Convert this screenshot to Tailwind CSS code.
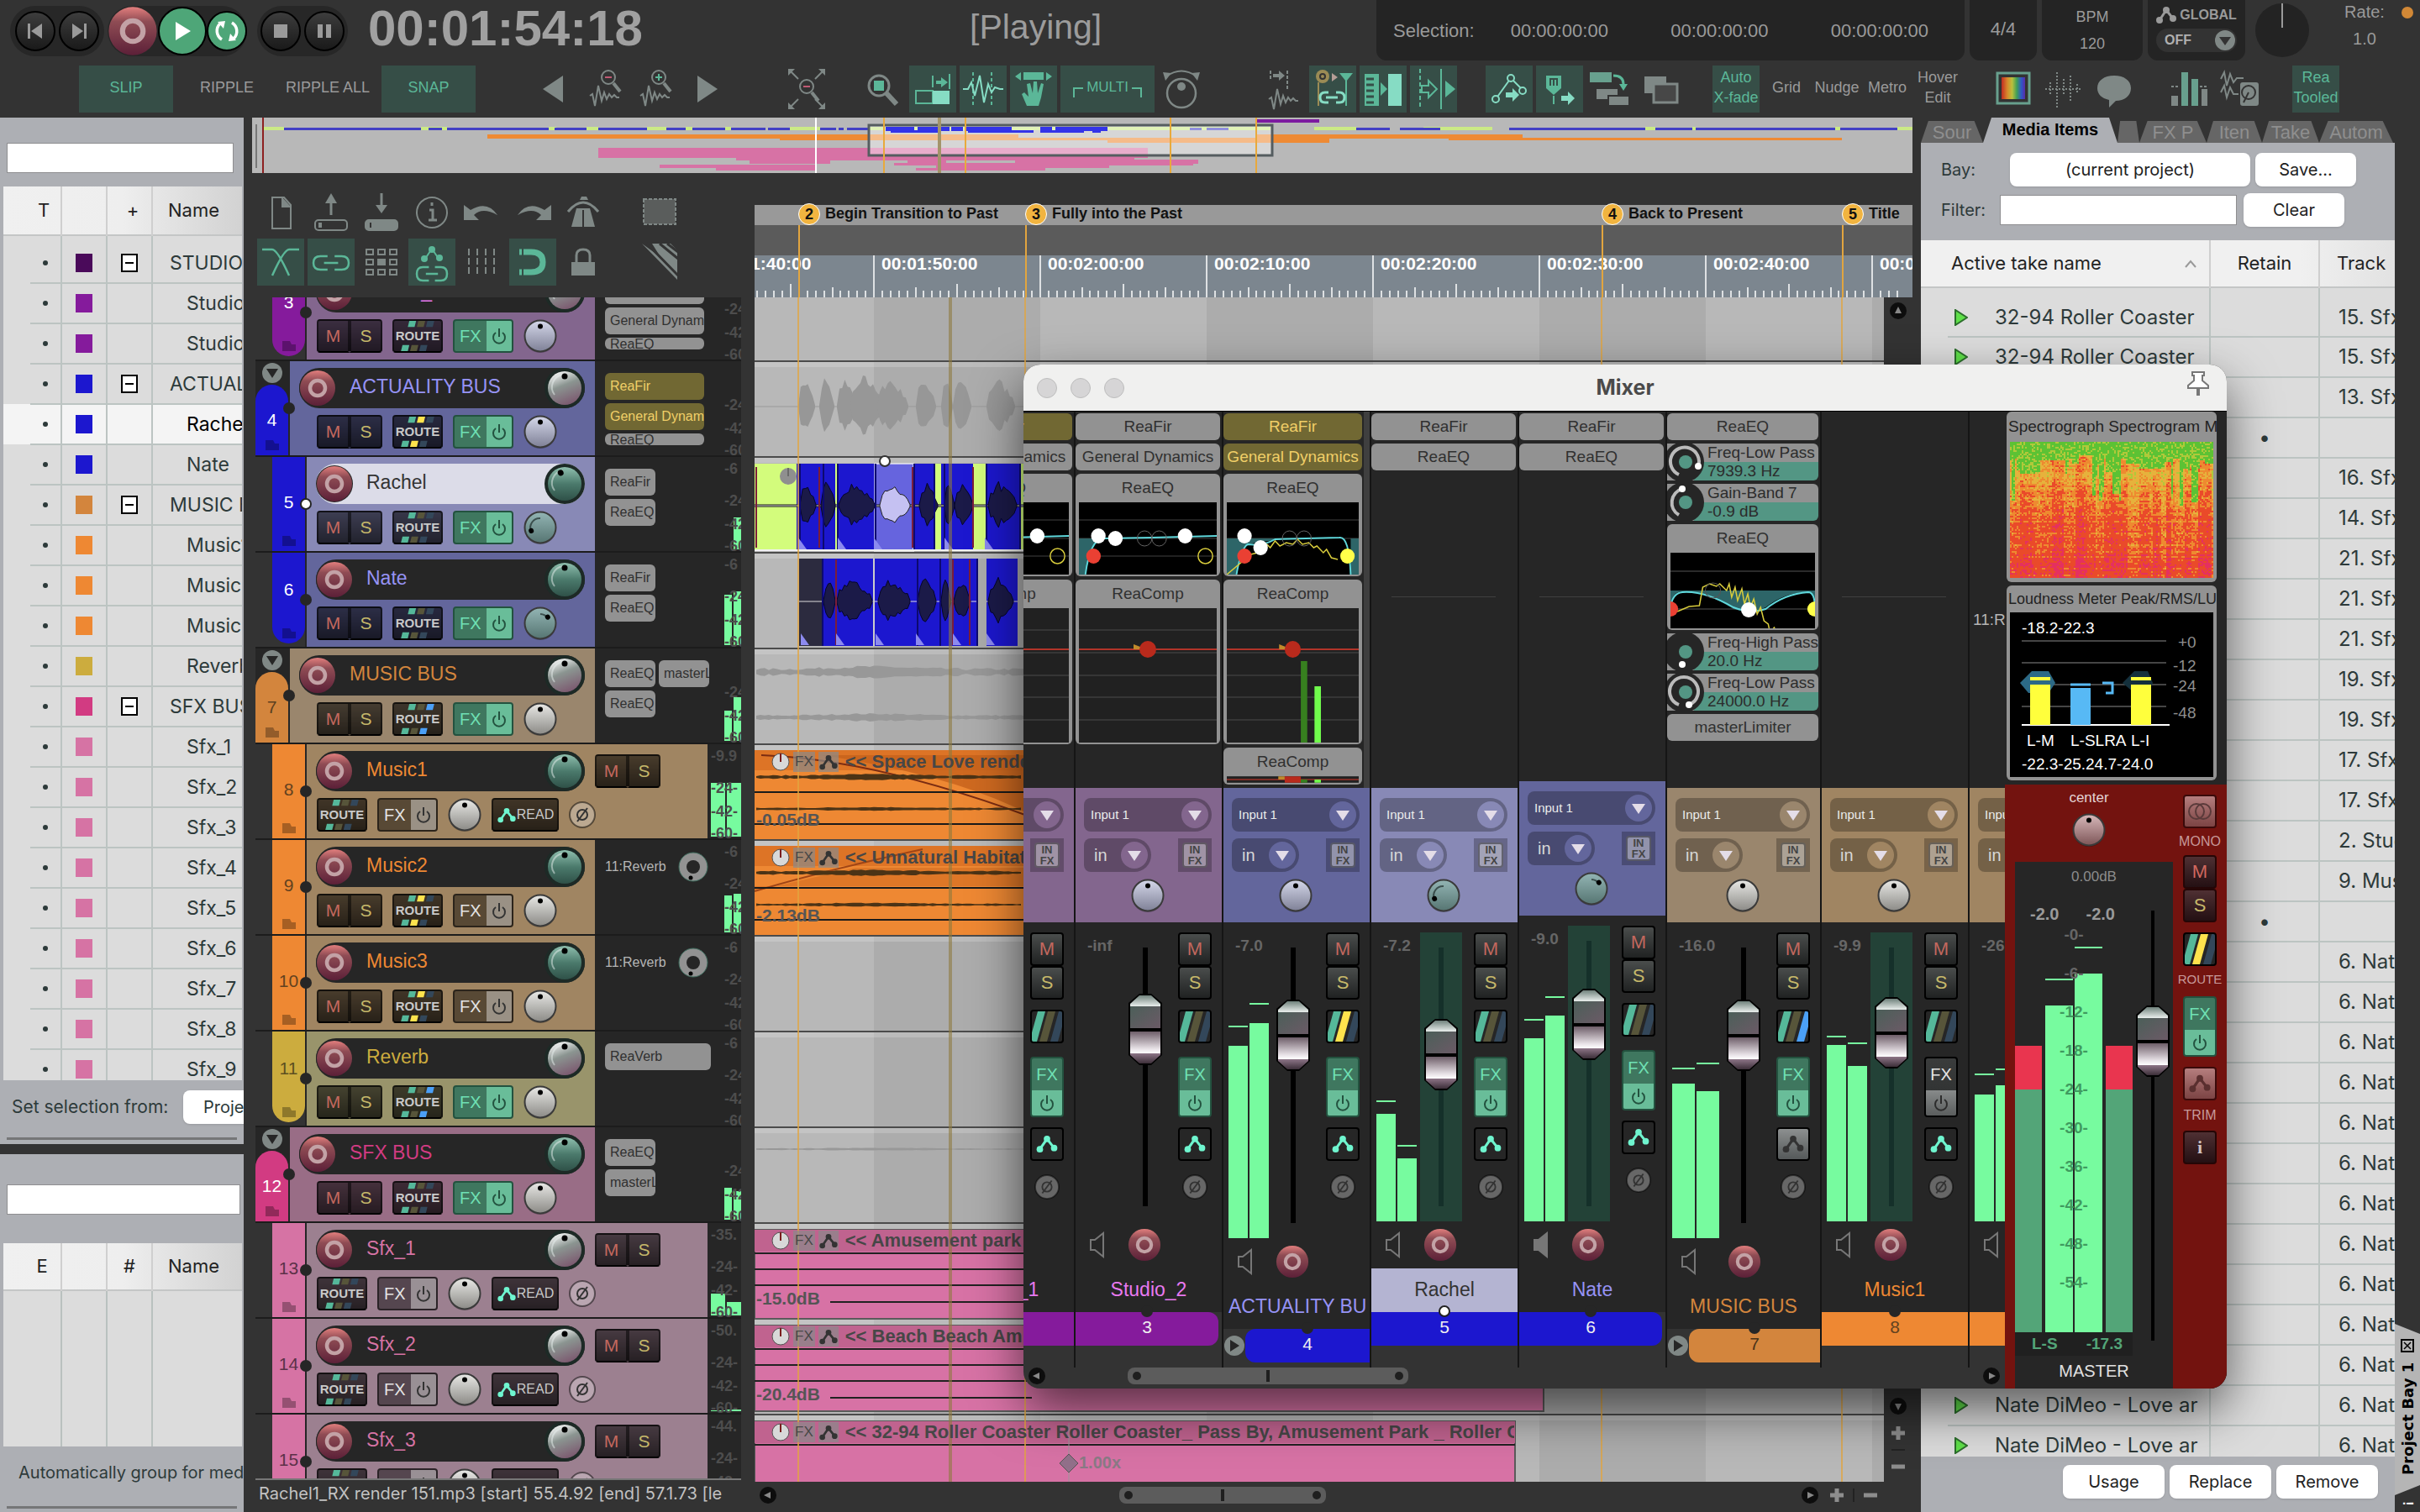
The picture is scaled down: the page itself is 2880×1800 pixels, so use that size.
<!DOCTYPE html>
<html lang="en">
<head>
<meta charset="utf-8">
<title>Mixer session</title>
<script src="https://cdn.jsdelivr.net/npm/@tailwindcss/browser@4"></script>
</head>
<body class="relative flex h-screen flex-col overflow-hidden bg-[#333333] font-['Liberation_Sans',Arial,sans-serif] text-[#9a9a9a]">
<svg class="absolute h-0 w-0" aria-hidden="true">
  <defs>
    <linearGradient id="kLight" x1="0" y1="0" x2="0" y2="1"><stop offset="0" stop-color="#e9e9e6"/><stop offset="1" stop-color="#8b8a86"/></linearGradient>
    <linearGradient id="kLilac" x1="0" y1="0" x2="0" y2="1"><stop offset="0" stop-color="#d5d8ea"/><stop offset="1" stop-color="#7e8096"/></linearGradient>
    <linearGradient id="kTeal" x1="0" y1="0" x2="0" y2="1"><stop offset="0" stop-color="#93b5b4"/><stop offset="1" stop-color="#567572"/></linearGradient>
    <linearGradient id="kPink" x1="0" y1="0" x2="0" y2="1"><stop offset="0" stop-color="#d8b9bb"/><stop offset="1" stop-color="#7d5557"/></linearGradient>
    <linearGradient id="vSilver" x1=".2" y1="0" x2=".6" y2="1"><stop offset="0" stop-color="#ffffff"/><stop offset=".45" stop-color="#8b9591"/><stop offset="1" stop-color="#7c5a70"/></linearGradient>
    <linearGradient id="vGreen" x1="0" y1="0" x2="0" y2="1"><stop offset="0" stop-color="#8fbfae"/><stop offset=".5" stop-color="#4b7a6c"/><stop offset="1" stop-color="#2f5148"/></linearGradient>
    <linearGradient id="recG" x1="0" y1="0" x2="0" y2="1"><stop offset="0" stop-color="#e27e7d"/><stop offset=".3" stop-color="#8f4c54"/><stop offset="1" stop-color="#5c2038"/></linearGradient>
    <linearGradient id="capA" x1="0" y1="0" x2="0" y2="1"><stop offset="0" stop-color="#70827c"/><stop offset="1" stop-color="#f3f7f5"/></linearGradient>
    <linearGradient id="capB" x1="0" y1="0" x2="1" y2="1"><stop offset="0" stop-color="#4c5f59"/><stop offset="1" stop-color="#6b5a66"/></linearGradient>
    <linearGradient id="capC" x1="0" y1="0" x2="0" y2="1"><stop offset="0" stop-color="#6e5e69"/><stop offset=".8" stop-color="#e9e3e8"/><stop offset="1" stop-color="#ffffff"/></linearGradient>
    <linearGradient id="capD" x1="0" y1="0" x2="0" y2="1"><stop offset="0" stop-color="#8d7587"/><stop offset="1" stop-color="#3c2f39"/></linearGradient>
    <linearGradient id="rainbow"><stop offset="0" stop-color="#c22b22"/><stop offset=".25" stop-color="#d88a2c"/><stop offset=".45" stop-color="#b9bf3c"/><stop offset=".65" stop-color="#3f9f57"/><stop offset=".85" stop-color="#2f56c9"/><stop offset="1" stop-color="#5b2ba6"/></linearGradient>
  </defs>
</svg>

<header class="flex-none">
  <div class="flex h-[74px] items-start">
    <div id="transport" class="flex h-[74px] w-[424px] items-center pl-3"></div>
    <div class="ml-[14px] w-[360px] pt-0.5 text-[60px] leading-[64px] font-bold text-[#a0a0a0]">00:01:54:18</div>
    <div class="flex-1 pt-2 pl-[356px] text-[41px] leading-12 text-[#9c9c9c]">[Playing]</div>
    <div class="flex h-[72px] w-[700px] flex-none items-center rounded-b-xl bg-[#242424] pr-[43px] pl-5 text-[22px]"><span class="w-[140px]">Selection:</span><span class="w-[191px]">00:00:00:00</span><span class="w-[191px]">00:00:00:00</span><span>00:00:00:00</span></div>
    <div class="ml-1.5 flex h-[72px] w-20 flex-none items-center justify-center rounded-b-xl bg-[#242424] pb-1 text-[22px]">4/4</div>
    <div class="ml-1.5 flex h-[72px] w-[120px] flex-none flex-col items-center justify-between rounded-b-xl bg-[#242424] py-2.5 text-[18px] leading-5"><span>BPM</span><span>120</span></div>
    <div class="ml-1.5 flex h-[72px] w-[116px] flex-none flex-col items-center rounded-b-xl bg-[#242424] pt-1.5">
      <span class="flex items-center gap-1 text-[16px] leading-6 font-bold"><svg class="h-5 w-6" viewBox="0 0 24 20"><path d="M4 16 12 4 20 14" fill="none" stroke="#9a9a9a" stroke-width="3"/><circle cx="4" cy="16" r="4" fill="#9a9a9a"/><circle cx="12" cy="4" r="4" fill="#9a9a9a"/><circle cx="20" cy="14" r="4" fill="#9a9a9a"/></svg>GLOBAL</span>
      <label class="relative mt-1 flex h-7 w-24 items-center"><select aria-label="Global automation" class="h-7 w-24 appearance-none rounded-full bg-[#333333] pl-2.5 text-[16px] font-bold text-[#b0b0b0]"><option>OFF</option></select><svg class="pointer-events-none absolute right-0.5 h-6 w-6" viewBox="0 0 24 24"><circle cx="12" cy="12" r="12" fill="#808886"/><path d="M5 8h14l-7 10z" fill="#333"/></svg></label>
    </div>
    <svg class="mt-1 ml-3 h-16 w-16 flex-none" viewBox="0 0 64 64"><circle cx="32" cy="32" r="32" fill="#232323"/><path d="M32 0v29" stroke="#9a9a9a" stroke-width="2"/></svg>
    <div class="ml-7 flex w-[76px] flex-none flex-col items-center gap-2 pt-0.5 text-[20px] leading-6"><span>Rate:</span><span>1.0</span></div>
    <div class="mt-2 mr-2 ml-1.5 h-3.5 w-3.5 flex-none rounded-full bg-[#d18836]"></div>
  </div>
  <div id="toolbar" class="flex h-[66px] items-start gap-1 pt-1 pl-[94px]"></div>
</header>

<div class="flex min-h-0 flex-1">
  <!-- left dock -->
  <aside class="flex w-[290px] flex-none flex-col font-[Inter,sans-serif] text-[#2d3a3a]">
    <section class="flex h-[1222px] flex-none flex-col overflow-hidden bg-[#adafb4]">
      <input aria-label="Filter tracks" class="mt-[30px] ml-2 h-9 w-[270px] flex-none border border-[#8e8e90] bg-white">
      <div class="mt-4 ml-1 h-[1064px] w-[284px] flex-none overflow-hidden bg-[#dcdcdc]">
        <table class="w-full table-fixed border-collapse text-[23px]">
          <thead><tr class="h-[58px] border-b-2 border-[#c4c6c6] bg-linear-to-r from-[#f0f0f0] via-[#eeeeee] to-[#d2d2d2] text-[22px] text-[#222]"><th class="w-8"></th><th class="w-[37px] border-r-2 border-[#cfcfcf] pr-1 font-normal">T</th><th class="w-[54px] border-r-2 border-[#cfcfcf]"></th><th class="w-[54px] border-r-2 border-[#cfcfcf] pl-2 font-normal">+</th><th class="pl-[18px] text-left font-normal">Name</th></tr></thead>
          <tbody id="trackTable"></tbody>
        </table>
      </div>
      <div class="flex h-[68px] items-center gap-[22px] overflow-hidden pb-1 pl-3.5 text-[21px] whitespace-nowrap"><span class="w-[182px]">Set selection from:</span><button class="h-10 w-[110px] flex-none rounded-lg bg-white pl-6 text-left text-[20px] shadow">Project</button></div>
      <div class="mx-2 h-[3px] flex-none bg-[#757678]"></div>
    </section>
    <section class="mt-3 flex flex-1 flex-col overflow-hidden bg-[#adafb4]">
      <input aria-label="Filter groups" class="mt-9 ml-2 h-9 w-[278px] flex-none border border-[#8e8e90] bg-white">
      <div class="mt-[34px] ml-1 h-[242px] w-[284px] flex-none bg-[#dcdcdc]">
        <table class="h-full w-full table-fixed border-collapse text-[22px] text-[#222]">
          <thead><tr class="h-[56px] border-b-2 border-[#c4c6c6] bg-linear-to-r from-[#f0f0f0] via-[#eeeeee] to-[#d2d2d2]"><th class="w-[69px] border-r-2 border-[#cfcfcf] pl-6 font-normal">E</th><th class="w-[54px] border-r-2 border-[#cfcfcf]"></th><th class="w-[54px] border-r-2 border-[#cfcfcf] font-normal">#</th><th class="pl-[18px] text-left font-normal">Name</th></tr></thead>
          <tbody><tr><td class="border-r-2 border-[#b9c1bf]"></td><td class="border-r-2 border-[#b9c1bf]"></td><td class="border-r-2 border-[#b9c1bf]"></td><td></td></tr></tbody>
        </table>
      </div>
      <div class="flex-1 overflow-hidden pt-4 pl-[22px] text-[20px] whitespace-nowrap">Automatically group for media</div>
      <div class="mx-2 mb-1 h-[3px] flex-none bg-[#757678]"></div>
    </section>
  </aside>

  <!-- project area -->
  <main class="ml-2.5 flex min-w-0 flex-1 flex-col">
    <svg id="navigator" class="h-[66px] w-full flex-none bg-[#b8b8b8]" viewBox="0 0 1976 66" preserveAspectRatio="none"></svg>
    <div class="flex min-h-0 flex-1">
      <div class="flex w-[598px] flex-none flex-col">
        <div class="h-[148px] flex-none pt-[18px] pl-1.5">
          <div id="tb1" class="flex gap-1"></div>
          <div id="tb2" class="mt-1 flex gap-1"></div>
        </div>
        <div class="ml-1 min-h-0 w-[578px] flex-1 overflow-hidden"><div id="tcp" class="-mt-[38px]"></div></div>
        <div class="ml-1 h-10 w-[578px] flex-none overflow-hidden border-t-2 border-[#777] pt-1 pl-1 font-[Inter,sans-serif] text-[20px] leading-6 whitespace-nowrap text-[#c2c2c2]">Rachel1_RX render 151.mp3 [start] 55.4.92 [end] 57.1.73 [le</div>
      </div>
      <div class="flex min-w-0 flex-1 flex-col pt-[38px]">
        <div id="markers" class="relative h-6 flex-none bg-[#999999]"></div>
        <div id="regions" class="relative h-9 flex-none bg-[#5b5b5b]"></div>
        <div id="ruler" class="relative h-[50px] flex-none overflow-hidden bg-[#7c868f]"></div>
        <div class="flex min-h-0 flex-1">
          <div id="lanes" class="relative min-w-0 flex-1 overflow-hidden bg-[#b6b6b6]"></div>
          <div class="flex w-[34px] flex-none flex-col items-center justify-between pt-1.5 pb-2">
            <svg class="h-5 w-5" viewBox="0 0 20 20"><circle cx="10" cy="10" r="10" fill="#0d0d0d"/><path d="M10 5l4 8H6z" fill="#888"/></svg>
            <svg class="h-[110px] w-5" viewBox="0 0 20 110"><circle cx="10" cy="28" r="10" fill="#0d0d0d"/><path d="M10 33l4-8H6z" fill="#888"/><path d="M2 60h16M10 52v16M2 100h16" stroke="#8d8d8d" stroke-width="5"/><path d="M2 80h16" stroke="#222" stroke-width="2"/></svg>
          </div>
        </div>
        <div class="flex h-9 flex-none items-center pb-1">
          <svg class="ml-1.5 h-5 w-5" viewBox="0 0 20 20"><circle cx="10" cy="10" r="10" fill="#0d0d0d"/><path d="M5 10l8-4v8z" fill="#888"/></svg>
          <div class="ml-[408px] flex h-5 w-[246px] items-center justify-between rounded-lg bg-[#5c5c5c] px-1.5"><i class="h-2.5 w-2.5 rounded-full bg-[#1f1f1f]"></i><i class="h-3.5 w-1 bg-[#1f1f1f]"></i><i class="h-2.5 w-2.5 rounded-full bg-[#1f1f1f]"></i></div>
          <svg class="mr-9 ml-auto h-5 w-24" viewBox="0 0 96 20"><circle cx="10" cy="10" r="10" fill="#0d0d0d"/><path d="M15 10l-8-4v8z" fill="#888"/><path d="M34 10h16M42 2v16M74 10h16" stroke="#8d8d8d" stroke-width="5"/><path d="M62 2v16" stroke="#222" stroke-width="2"/></svg>
        </div>
      </div>
    </div>
  </main>

  <!-- media items dock -->
  <aside class="ml-2.5 flex w-[564px] flex-none flex-col font-[Inter,sans-serif] text-[#2d3a3a]">
    <nav class="flex h-[30px] flex-none items-end font-['Liberation_Sans',Arial,sans-serif] text-[22px] text-[#8f8f8f]" id="dockTabs"></nav>
    <form class="flex h-[116px] flex-none flex-col gap-2 bg-[#adafb4] pt-3 pl-6 text-[20px]">
      <div class="flex items-center"><label for="bay" class="w-[82px]">Bay:</label><button id="bay" type="button" class="h-10 w-[286px] rounded-lg bg-white text-[20px] text-[#222] shadow">(current project)</button><button type="button" class="ml-1.5 h-10 w-[120px] rounded-lg bg-white text-[20px] text-[#222] shadow">Save...</button></div>
      <div class="flex items-center"><label for="filter" class="w-[70px]">Filter:</label><input id="filter" class="h-9 w-[282px] border border-[#8e8e90] bg-white"><button type="button" class="ml-2 h-10 w-[120px] rounded-lg bg-white text-[20px] text-[#222] shadow">Clear</button></div>
    </form>
    <div class="min-h-0 flex-1 overflow-hidden bg-[#dcdcdc]">
      <table class="w-full table-fixed border-collapse text-[24px] whitespace-nowrap">
        <thead><tr class="h-[56px] border-b-2 border-[#c4c6c6] bg-linear-to-r from-[#f0f0f0] from-80% to-[#e2e2e2] text-left text-[22px] text-[#222]"><th class="w-8"></th><th class="w-[312px] border-r-2 border-[#cfcfcf] font-normal"><span class="flex items-center justify-between pr-3.5 pl-1">Active take name<svg class="h-3 w-4" viewBox="0 0 16 12"><path d="M2 10l6-7 6 7" fill="none" stroke="#999" stroke-width="2"/></svg></span></th><th class="w-[130px] border-r-2 border-[#cfcfcf] text-center font-normal">Retain</th><th class="overflow-hidden pl-5 font-normal">Track</th></tr></thead>
        <tbody id="mediaTable"></tbody>
      </table>
    </div>
    <div class="flex h-[66px] flex-none items-start justify-end gap-1.5 bg-[#adafb4] pt-2.5 pr-5 text-[20px] text-[#222]"><button class="h-10 w-[121px] rounded-lg bg-white shadow">Usage</button><button class="h-10 w-[121px] rounded-lg bg-white shadow">Replace</button><button class="h-10 w-[121px] rounded-lg bg-white shadow">Remove</button></div>
  </aside>
  <div class="flex w-[30px] flex-none flex-col justify-end">
    <a href="#bay" class="flex h-[204px] w-[30px] flex-none rotate-180 items-center gap-3 bg-[#b5b5b5] pt-6 text-[18px] font-bold text-black [clip-path:polygon(0_12px,100%_0,100%_100%,0_192px)] [writing-mode:vertical-rl]"><span class="font-['DejaVu_Sans',sans-serif] whitespace-nowrap">Project Bay 1</span><span class="h-4 w-4 border-2 border-black"><svg class="h-3 w-3" viewBox="0 0 12 12"><path d="M2 2l8 8M10 2l-8 8" stroke="#000" stroke-width="1.500"/></svg></span></a>
    <b class="h-5 flex-none rotate-90 text-center text-[16px] leading-5 text-white">!</b>
  </div>
</div>

<!-- mixer window -->
<section aria-label="Mixer" class="absolute top-[434px] left-[1218px] flex h-[1219px] w-[1432px] flex-col overflow-hidden rounded-[20px] bg-[#333333] shadow-[0_24px_60px_rgba(0,0,0,0.6)]">
  <div class="flex h-14 flex-none items-center border-b border-black bg-[#f0f0ef] px-4">
    <div class="flex w-[200px] gap-4"><i class="h-6 w-6 rounded-full border border-[#bdbdbd] bg-[#d6d5d6]"></i><i class="h-6 w-6 rounded-full border border-[#bdbdbd] bg-[#d6d5d6]"></i><i class="h-6 w-6 rounded-full border border-[#bdbdbd] bg-[#d6d5d6]"></i></div>
    <h1 class="flex-1 text-center font-[Inter,sans-serif] text-[25px] font-bold text-[#4a4a4a]">Mixer</h1>
    <div class="flex w-[200px] justify-end pb-3"><svg class="h-8 w-9" viewBox="0 0 36 32" fill="#fff" stroke="#777" stroke-width="2"><path d="M11 3h14v4h-2v6l7 6v3H6v-3l7-6V7h-2zM17 22v8h2v-8" /></svg></div>
  </div>
  <div class="flex min-h-0 flex-1">
    <div class="flex min-w-0 flex-1 flex-col overflow-hidden">
      <div id="strips" class="-ml-[116px] flex h-[1138px] flex-none"></div>
      <div class="flex flex-1 items-start">
        <svg class="ml-1.5 h-5 w-5" viewBox="0 0 20 20"><circle cx="10" cy="10" r="10" fill="#0d0d0d"/><path d="M5 10l8-4v8z" fill="#888"/></svg>
        <div class="ml-[98px] flex h-5 w-[334px] items-center justify-between rounded-lg bg-[#5c5c5c] px-1.5"><i class="h-2.5 w-2.5 rounded-full bg-[#1f1f1f]"></i><i class="h-3.5 w-1 bg-[#1f1f1f]"></i><i class="h-2.5 w-2.5 rounded-full bg-[#1f1f1f]"></i></div>
        <svg class="mr-1.5 ml-auto h-5 w-5" viewBox="0 0 20 20"><circle cx="10" cy="10" r="10" fill="#0d0d0d"/><path d="M15 10l-8-4v8z" fill="#888"/></svg>
      </div>
    </div>
    <div id="master" class="flex w-[264px] flex-none flex-col bg-[#262626]"></div>
  </div>
</section>

<script>
const $ = id => document.getElementById(id);
let seed = 7;
const rnd = () => (seed = (seed * 16807) % 2147483647) / 2147483647;

/* ---------- shared drawings ---------- */
const node3 = c => `<path d="M7 27 18 11 29 25" fill="none" stroke="${c}" stroke-width="4"/><circle cx="7" cy="27" r="5" fill="${c}"/><circle cx="18" cy="11" r="5" fill="${c}"/><circle cx="29" cy="25" r="5" fill="${c}"/>`;
const power = c => `<svg class="h-[22px] w-5" viewBox="0 0 20 22"><path d="M6 7a7 7 0 1 0 8 0M10 2v10" fill="none" stroke="${c}" stroke-width="2"/></svg>`;
const rec = cls => `<svg class="${cls}" viewBox="0 0 44 44"><circle cx="22" cy="22" r="21" fill="url(#recG)"/><circle cx="22" cy="22" r="9" fill="none" stroke="#c3a2a6" stroke-width="4.5"/></svg>`;
const knob = (fill, ang = 0) => `<svg class="h-10 w-10" viewBox="0 0 40 40"><ellipse cx="20" cy="24" rx="18" ry="16" fill="#000" opacity=".25"/><circle cx="20" cy="20" r="18.5" fill="url(#${fill})" stroke="#3a3a3a" stroke-width="2"/>${ang ? `<path d="M20 9${ang < 0 ? 'A11 11 0 0 0 9 24' : 'A11 11 0 0 1 29 14'}" fill="none" stroke="#1c2b29" stroke-width="2" opacity=".7"/>` : ''}<circle cx="20" cy="8.500" r="3" transform="rotate(${ang} 20 20)" fill="#000"/></svg>`;
const vol = (green, rot = 0) => `<svg class="h-12 w-12" viewBox="0 0 48 48"><circle cx="24" cy="24" r="24" fill="#1d2a26"/><circle cx="24" cy="24" r="20" fill="url(#${green ? 'vGreen' : 'vSilver'})"/><path d="M22 8a15 15 0 0 0-10 24" fill="none" stroke="#e8f0ee" stroke-opacity=".5" stroke-width="2"/><circle cx="24" cy="10" r="3.500" transform="rotate(${rot} 24 24)" fill="#000"/></svg>`;
const stripe = (y, off, c) => `<path d="M${17 + off} ${y}h9l-2 8h-9z" fill="#55b89a"/><path d="M${29 + off} ${y}h9l-2 8h-9z" fill="${c[0]}"/><path d="M${41 + off} ${y}h9l-2 8h-9z" fill="${c[1]}"/>`;
const rc = k => k === 'y' ? ['#ffe34d', '#33475a'] : k === 'b' ? ['#57553a', '#4ba0f7'] : ['#57553a', '#33475a'];
const routeBtn = k => `<button class="relative flex h-10 w-[60px] flex-none items-center justify-center rounded border-2 border-black/50 border-b-black bg-linear-to-b from-black/60 to-black/75 text-[15px] font-bold text-[#c9c9c9]"><svg class="absolute inset-0 h-full w-full" viewBox="0 0 60 40">${stripe(0, 2, rc(k))}${stripe(32, -7, rc(k))}</svg>ROUTE</button>`;
const ms = `<span class="flex flex-none"><button class="h-10 w-[39px] rounded-l border-2 border-black/50 border-b-black bg-linear-to-b from-black/55 to-black/75 text-[21px] leading-9 text-[#c2685e]">M</button><button class="h-10 w-[39px] rounded-r border-2 border-black/50 border-b-black bg-linear-to-b from-black/55 to-black/75 text-[21px] leading-9 text-[#c6b86a]">S</button></span>`;
const fxBtn = on => on
  ? `<button class="flex h-10 w-[72px] flex-none overflow-hidden rounded border-2 border-[#23523f] bg-[#3f775f] text-[20px] leading-9 text-[#6fe0b4]"><span class="w-10">FX</span><span class="flex h-9 w-8 items-center justify-center bg-[#69bd99]">${power('#23523f')}</span></button>`
  : `<button class="flex h-10 w-[72px] flex-none overflow-hidden rounded border-2 border-black/50 bg-black/45 text-[20px] leading-9 text-[#e4e4e4]"><span class="w-10">FX</span><span class="flex h-9 w-8 items-center justify-center bg-white/40">${power('#333')}</span></button>`;
const phase = cls => `<svg class="${cls}" viewBox="0 0 32 32"><circle cx="16" cy="16" r="15" fill="#fff" fill-opacity=".3" stroke="#000" stroke-opacity=".5" stroke-width="2"/><circle cx="16" cy="16" r="6" fill="none" stroke="#333" stroke-width="2"/><path d="M10 24 22 8" stroke="#333" stroke-width="2"/></svg>`;

/* ---------- transport ---------- */
const dark = inner => `<button class="flex h-12 w-12 flex-none items-center justify-center rounded-full border-2 border-black bg-linear-to-b from-[#3d3d3d] to-[#1a1a1a]"><svg class="h-7 w-7" viewBox="0 0 28 28" fill="#9a9a9a">${inner}</svg></button>`;
$('transport').innerHTML = `
<div class="flex h-[60px] flex-none items-center gap-1 rounded-full bg-[#272727] px-1.5">${dark('<path d="M5 5h3v18H5zM22 5v18L9 14z"/>')}${dark('<path d="M20 5h3v18h-3zM6 5v18l13-9z"/>')}</div>
<div class="ml-1 flex h-[60px] flex-none items-center rounded-full bg-[#272727]"><button class="flex h-[60px] w-[60px] items-center justify-center">${rec('h-[60px] w-[60px]')}</button>
<button class="flex h-[58px] w-[58px] items-center justify-center rounded-full border-2 border-black bg-[#4ea678]"><svg class="h-7 w-7" viewBox="0 0 28 28"><path d="M6 3v22l18-11z" fill="#fff"/></svg></button>
<button class="flex h-12 w-12 items-center justify-center rounded-full border-2 border-black bg-[#4ea678]"><svg class="h-8 w-8" viewBox="0 0 32 32" fill="none" stroke="#fff" stroke-width="3.500"><path d="M10 26A12 12 0 0 1 8 7M22 6a12 12 0 0 1 2 19"/><path d="M5 5l9-1-2 9zM27 27l-9 1 2-9z" fill="#fff" stroke="none"/></svg></button></div>
<div class="ml-3 flex h-[60px] flex-none items-center gap-1 rounded-full bg-[#272727] px-1">${dark('<path d="M6 6h16v16H6z"/>')}${dark('<path d="M6 6h6v16H6zM16 6h6v16h-6z"/>')}</div>`;

/* ---------- main toolbar ---------- */
const G = '#7f8886', T = '#5bb798', L = '#86dcc4';
const ic = (inner, on) => `<button class="h-14 w-14 flex-none ${on ? 'bg-[#364e47]' : ''}"><svg class="h-14 w-14" viewBox="0 0 56 56" fill="none" stroke-width="2">${inner}</svg></button>`;
const txt = (t, on, w) => `<button class="flex h-14 flex-none items-center justify-center pb-1 text-[18px] leading-6 whitespace-nowrap ${w ? 'w-28' : 'w-14'} ${on ? 'bg-[#364e47] text-[#5bb798]' : ''}"><span>${t}</span></button>`;
const gap = c => `<i class="${c} flex-none"></i>`;
const wave = (x, y, c) => `<path d="M${x} ${y}l3-2 3 14 4-24 4 18 3-10 3 8 3-6 3 4 3-3 3 3h3" stroke="${c}"/>`;
const lens = (s) => `<circle cx="32" cy="14" r="8" stroke="${G}"/><path d="M38 21l8 10" stroke="${G}" stroke-width="4"/>${s}`;
$('toolbar').innerHTML = [
  txt('SLIP', 1, 1), gap('w-0'), txt('RIPPLE', 0, 1), gap('w-0'), txt('RIPPLE ALL', 0, 1), gap('w-0'), txt('SNAP', 1, 1),
  gap('w-[58px]'),
  ic(`<path d="M38 12v32L14 28z" fill="${G}"/>`),
  ic(lens(`<path d="M28 14h8" stroke="#c05a74"/>`) + wave(10, 36, G)),
  ic(lens(`<path d="M28 14h8M32 10v8" stroke="${T}"/>`) + wave(10, 36, G)),
  ic(`<path d="M18 12v32l24-16z" fill="${G}"/>`),
  gap('w-14'),
  ic(`<circle cx="28" cy="25" r="8" stroke="${G}"/><path d="M24 25h8" stroke="#c05a74"/><path d="M34 32l8 10" stroke="${G}" stroke-width="4"/><path d="M18 16 9 7M38 16l9-9M18 40l-9 9M38 40l9 9" stroke="${G}"/><path d="M6 4h8l-8 8zM50 4v8l-8-8zM6 52v-8l8 8zM50 52h-8l8-8z" fill="${G}"/>`),
  gap('w-[26px]'),
  ic(`<circle cx="24" cy="24" r="12" stroke="${G}" stroke-width="3"/><path d="M18 18h12v12H18z" fill="${T}"/><path d="M33 33l12 13" stroke="${G}" stroke-width="6"/>`),
  ic(`<path d="M8 30h20v15H8z" stroke="${T}"/><path d="M28 30h20v16H28z" fill="${L}"/><path d="M28 12v14M48 10v18" stroke="${T}"/><path d="M32 18h6v-4l8 6-8 6v-4h-6z" fill="${T}"/>`, 1),
  ic(`<path d="M16 8v42M38 8v42" stroke="${T}" stroke-dasharray="4 3"/><path d="M4 28h6l4-8 4 16 6-24 5 32 5-22 4 10 4-6 6 2h4" stroke="${L}"/>`, 1),
  ic(`<path d="M16 8h24v9H16zM13 8v10l-7-5zM43 8v10l7-5z" fill="${T}"/><path d="M20 48l-6-14 3-2 5 5-2-15 4-1 3 12 1-14h4l1 14 4-12 3 1-3 16-3 10z" fill="${T}"/>`, 1),
  `<button class="flex h-14 w-28 flex-none items-center justify-center gap-1 bg-[#364e47] pb-1 text-[17px] text-[#5bb798]"><i class="mt-3 h-3 w-3 border-t-2 border-l-2 border-[#5bb798]"></i>MULTI<i class="mt-3 h-3 w-3 border-t-2 border-r-2 border-[#5bb798]"></i></button>`,
  ic(`<circle cx="28" cy="33" r="17" stroke="${G}" stroke-width="2.500"/><circle cx="28" cy="25" r="5" fill="${G}"/><path d="M10 13q18-13 36 0" stroke="${G}"/><path d="M6 8l10 1-7 9zM50 8l-10 1 7 9z" fill="${G}"/>`),
  gap('w-14'),
  ic(`<path d="M14 6v12M34 6v24" stroke="${G}" stroke-dasharray="4 2"/><path d="M17 10h7v-4l7 6-7 6v-4h-7z" fill="${G}"/>` + wave(12, 40, G)),
  ic(`<circle cx="16" cy="13" r="8" fill="#9b8b55"/><circle cx="16" cy="13" r="3" stroke="#333"/><path d="M27 9l7 5-7 5z" fill="#b59d96"/><path d="M36 9h16l-8 10z" fill="${T}"/><path d="M11 20v28" stroke="#9b8b55"/><path d="M44 18v30" stroke="${T}"/><path d="M23 32h-4q-6 0-6 6t6 6h4M32 32h4q6 0 6 6t-6 6h-4M20 38h14" stroke="${L}" stroke-width="3"/>`, 1),
  ic(`<path d="M6 10h17v38H6z" fill="${T}"/><path d="M34 10h16v38H34z" fill="${L}"/><path d="M8 16h9M8 23h9M8 30h9M8 37h9M8 44h9" stroke="#364e47" stroke-width="3"/><path d="M25 20l8 8-8 8z" fill="${T}"/>`, 1),
  ic(`<path d="M12 4v48" stroke="${T}" stroke-dasharray="5 3"/><path d="M37 4v48" stroke="${T}"/><path d="M14 24h8v-6l10 10-10 10v-6h-8z" stroke="${T}"/><path d="M42 18l12 10-12 10z" fill="${T}"/>`, 1),
  gap('w-[26px]'),
  ic(`<path d="M12 40 30 15l15 15" stroke="${L}"/><g fill="#364e47" stroke="${L}"><circle cx="12" cy="40" r="4"/><circle cx="30" cy="15" r="4"/><circle cx="44" cy="30" r="4"/></g><path d="M24 32h8v-5l8 8-8 8v-5h-8z" fill="${L}"/>`, 1),
  ic(`<path d="M12 12h18v15l-9 8-9-8z" fill="${T}"/><path d="M17 24v-8h8v8M21 16v8" stroke="#364e47"/><path d="M21 36v10" stroke="${T}"/><path d="M30 36h8v-5l8 8-8 8v-5h-8z" fill="${L}"/>`, 1),
  ic(`<path d="M4 8h26v12H4z" fill="#68a08e"/><path d="M32 12q12 0 12 10" stroke="${T}" stroke-width="3"/><path d="M39 22h10l-5 8z" fill="${T}"/><path d="M12 28h25v12H12z" fill="${G}"/><path d="M26 36h25v12H26z" fill="${G}" stroke="#333"/>`),
  ic(`<path d="M8 12h28v22H8z" fill="${G}" stroke="#333"/><path d="M20 22h28v22H20z" fill="#474747" stroke="${G}" stroke-width="3"/>`),
  gap('w-[26px]'),
  txt('Auto<br>X-fade', 1), txt('Grid'), txt('Nudge'), txt('Metro'), txt('Hover<br>Edit'),
  gap('w-[26px]'),
  ic(`<path d="M9 9h38v36H9z" stroke="#68a08e" stroke-width="3"/><path d="M14 14h28v26H14z" fill="url(#rainbow)"/>`),
  ic(`<path d="M6 28h44M12 20v16M20 8v44M28 16v20M36 12v32M44 22v12" stroke="${G}" stroke-dasharray="2 2"/>`),
  ic(`<path d="M28 12c12 0 20 6 20 15s-8 15-18 15l-8 8v-9C13 39 8 34 8 27c0-9 8-15 20-15z" fill="${G}"/>`),
  gap('w-[26px]'),
  ic(`<path d="M6 36h8v12H6zM42 28h7v20h-7z" fill="${G}"/><path d="M18 8h8v40h-8zM30 16h8v32h-8z" fill="#68a08e"/><path d="M6 25h10M40 25h10" stroke="${G}" stroke-dasharray="3 2"/>`),
  ic(`<path d="M5 16l4-8 3 16 4-14 4 10 4-5h8M5 32l4-8 3 14 4-12 4 8h6" stroke="${G}"/><rect x="28" y="20" width="22" height="28" rx="3" fill="${G}"/><circle cx="38" cy="32" r="8" stroke="#333"/><path d="M38 32l-6 12" stroke="#333"/>`),
  gap('w-[26px]'),
  txt('Rea<br>Tooled', 1),
].join('');

/* ---------- small project toolbars ---------- */
$('tb1').innerHTML = [
  ic(`<path d="M18 11h14l8 9v28H18z" stroke="${G}"/><path d="M30 11v11h10" fill="${G}" stroke="${G}"/>`),
  ic(`<rect x="9" y="38" width="38" height="12" rx="4" stroke="${G}"/><path d="M15 41v6" stroke="${G}" stroke-width="4"/><path d="M28 32V12" stroke="${G}" stroke-width="3"/><path d="M21 18l7-12 7 12z" fill="${G}"/>`),
  ic(`<rect x="9" y="38" width="38" height="12" rx="4" fill="${G}" stroke="${G}"/><path d="M15 41v6" stroke="#333"/><path d="M28 6v18" stroke="${G}" stroke-width="3"/><path d="M21 20l7 10 7-10z" fill="${G}"/>`),
  ic(`<circle cx="28" cy="29" r="18" stroke="${G}"/><path d="M25 26h4v12M24 38h10M28 17v4" stroke="${G}" stroke-width="3"/>`),
  ic(`<path d="M6 20v18h18l-6-6q10-10 28 0Q34 14 14 26z" fill="${G}"/>`),
  ic(`<path d="M50 20v18H32l6-6q-10-10-28 0Q22 14 42 26z" fill="${G}"/>`),
  ic(`<path d="M26 10h6l2 4H24z" fill="${G}"/><path d="M10 28q18-22 36 0" stroke="${G}" stroke-width="3"/><path d="M20 24h16l6 22H14z" fill="${G}"/><path d="M28 26v20" stroke="#333"/>`),
  gap('w-[26px]'),
  ic(`<path d="M10 13h38v30H10z" fill="#5a5d5c" stroke="${G}" stroke-dasharray="4 2"/>`)].join('');
const chain = (x, y, w, c) => `<path d="M${x + w * .4} ${y}h-${w * .2}q-${w * .2} 0-${w * .2} 8t${w * .2} 8h${w * .2}M${x + w * .6} ${y}h${w * .2}q${w * .2} 0 ${w * .2} 8t-${w * .2} 8h-${w * .2}M${x + w * .3} ${y + 8}h${w * .4}" stroke="${c}" stroke-width="2.500"/>`;
let sq = '';
for (let i = 0; i < 9; i++) sq += `<rect x="${10 + (i % 3) * 14}" y="${13 + (i / 3 | 0) * 12}" width="8" height="6" stroke="${G}" fill="${i === 4 ? G : 'none'}"/>`;
$('tb2').innerHTML = [
  ic(`<path d="M6 13h12q6 0 20 31M50 13H38q-6 0-20 31" stroke="${T}" stroke-width="2.500"/>`, 1),
  ic(chain(7, 21, 42, T), 1),
  ic(sq),
  ic(`<path d="M20 24l8-12 8 12" stroke="${T}"/><g fill="${T}"><circle cx="19" cy="24" r="4"/><circle cx="28" cy="13" r="4"/><circle cx="37" cy="23" r="4"/></g>` + chain(10, 34, 36, T), 1),
  ic(`<path d="M12 12v32M22 12v32M32 12v32M42 12v32" stroke="${G}" stroke-dasharray="8 3"/>`),
  ic(`<path d="M12 16h14q14 0 14 12T26 40H12" stroke="${T}" stroke-width="7"/><path d="M16 12v8M16 36v8" stroke="#364e47" stroke-width="2"/>`, 1),
  ic(`<path d="M14 28h28v16H14z" fill="${G}"/><path d="M20 28v-8q0-7 8-7t8 7v8" stroke="${G}" stroke-width="3"/>`),
  gap('w-[26px]'),
  ic(`<path d="M8 6l42 43V14l-8-8H20l10 16" fill="${G}"/><path d="M13 5l38 39M29 6l22 18M38 6l13 10" stroke="#333" stroke-width="3"/>`)].join('');

/* ---------- left track table ---------- */
[['STUDIO', '#4a0a5a', 0, 1], ['Studio_1', '#851b9c', 1], ['Studio_2', '#851b9c', 1], ['ACTUALITY BUS', '#1c17cf', 0, 1], ['Rachel', '#1c17cf', 1, 0, 1], ['Nate', '#1c17cf', 1], ['MUSIC BUS', '#d3853d', 0, 1], ['Music1', '#ee8833', 1], ['Music2', '#ee8833', 1], ['Music3', '#ee8833', 1], ['Reverb', '#ccac3e', 1], ['SFX BUS', '#d23b82', 0, 1],
 ...[1, 2, 3, 4, 5, 6, 7, 8, 9].map(n => ['Sfx_' + n, '#d673a4', 1])].forEach(([n, c, ind, box, sel], i) => {
  $('trackTable').insertAdjacentHTML('beforeend', `<tr class="${i ? 'h-12' : 'h-[57px]'} ${sel ? 'bg-[#f4f4f4] text-black' : ''}"><td></td><td class="border-r-2 border-b-2 border-[#bcc4c2] ${i ? '' : 'pt-2'}"><i class="mx-auto block h-1.5 w-1.5 rounded-full bg-[#2d3a3a]"></i></td><td class="border-r-2 border-b-2 border-[#bcc4c2] ${i ? '' : 'pt-2'}"><i class="mx-auto block h-[22px] w-5" style="background:${c}"></i></td><td class="border-r-2 border-b-2 border-[#bcc4c2] ${i ? '' : 'pt-2'}">${box ? '<i class="mx-auto flex h-[22px] w-5 items-center justify-center border-2 border-black bg-white"><i class="h-0.5 w-2.5 bg-black"></i></i>' : ''}</td><td class="overflow-hidden border-b-2 border-[#bcc4c2] text-[23px] leading-8 whitespace-nowrap ${i ? '' : 'pt-2'} ${ind ? 'pl-10' : 'pl-5'}">${n}</td></tr>`);
});

/* ---------- media table ---------- */
const tk = ['15. Sfx', '15. Sfx', '13. Sfx', '', '16. Sfx', '14. Sfx', '21. Sfx', '21. Sfx', '21. Sfx', '19. Sfx', '19. Sfx', '17. Sfx', '17. Sfx', '2. Studio', '9. Music', ''];
for (let i = 0; i < 29; i++) {
  const t = i < 16 ? tk[i] : '6. Nate';
  $('mediaTable').insertAdjacentHTML('beforeend', `<tr class="${i ? 'h-12' : 'h-[59px]'}"><td></td><td class="border-r-2 border-b-2 border-[#bcc4c2] ${i ? '' : 'pt-3'}"><span class="flex items-center gap-8 overflow-hidden pl-2 leading-8"><svg class="h-5 w-4 flex-none" viewBox="0 0 16 20"><path d="M1 1v18L15 10z" fill="#5fe049" stroke="#2c6e2c" stroke-width="2"/></svg>${i < 3 ? '32-94 Roller Coaster' : 'Nate DiMeo - Love ar'}</span></td><td class="border-r-2 border-b-2 border-[#bcc4c2] text-center leading-8">${t ? '' : '•'}</td><td class="overflow-hidden border-b-2 border-[#bcc4c2] pl-[22px] leading-8 ${i ? '' : 'pt-3'}">${t}</td></tr>`);
}
$('dockTabs').innerHTML = [['Sour', 'w-[74px]'], ['Media Items', 'w-[160px]'], ['', 'w-[26px]'], ['FX P', 'w-20'], ['Iten', 'w-[66px]'], ['Take', 'w-[68px]'], ['Autom', 'w-[88px]']].map(([t, w], i) => i === 1
  ? `<a href="#bay" class="${w} h-[30px] bg-[#adafb4] text-center text-[20px] leading-7 font-bold text-black [clip-path:polygon(10px_0,150px_0,100%_100%,0_100%)]">${t}</a>`
  : `<a href="#bay" class="${w} h-[26px] overflow-hidden bg-[#666666] text-center leading-7 [clip-path:polygon(12%_0,86%_0,100%_100%,0_100%)]">${t}</a>`).join('');

/* ---------- navigator ---------- */
const nv = [];
const seg = (y, h, c, l) => l.forEach(([a, b]) => nv.push(`<rect x="${a - 300}" y="${y}" width="${b - a}" height="${h}" fill="${c}"/>`));
seg(11, 4, '#cbea86', [[314, 338], [501, 532], [653, 662], [698, 712], [770, 793], [816, 824], [863, 870], [940, 976], [1034, 1512], [1564, 1614], [1694, 1776], [1958, 1970], [2014, 2018], [2184, 2190], [2258, 2276]]);
seg(12, 3, '#4340c4', [[338, 501], [510, 526], [532, 653], [660, 698], [712, 770], [793, 816], [824, 863], [870, 911], [914, 940], [976, 995], [998, 1004], [1008, 1034], [1416, 1430], [1436, 1462], [1614, 1654], [1666, 1714], [1796, 1958], [1970, 2014], [2018, 2184], [2190, 2258]]);
seg(20, 5, '#ee8a34', [[580, 1212], [1496, 1812]]);
seg(24, 3, '#ee8a34', [[928, 1582], [1724, 2192]]);
seg(24, 6, '#ee8a34', [[1318, 1582]]);
seg(36, 12, '#d772a5', [[712, 1366]]);
seg(48, 3, '#d772a5', [[876, 1350]]);
seg(50, 5, '#d772a5', [[892, 988], [1080, 1126], [1208, 1426]]);
seg(54, 3, '#d772a5', [[1064, 1420]]);
seg(56, 4, '#d772a5', [[785, 970], [1114, 1320]]);
seg(60, 3, '#d772a5', [[852, 970], [1090, 1244]]);
seg(2, 4, '#7d1ba0', [[1496, 1570]]);
nv.push('<rect x="734" y="9" width="480" height="36" fill="#fff" fill-opacity=".42" stroke="#555d60" stroke-width="3"/>');
seg(11, 5, '#3434e8', [[1054, 1088], [1092, 1130], [1132, 1146], [1150, 1204], [1238, 1252], [1256, 1318]]);
seg(15, 3, '#3434e8', [[1060, 1120], [1152, 1230], [1238, 1290], [1300, 1310]]);
[1052, 1149, 1393, 1495].forEach(x => nv.push(`<path d="M${x - 300} 0v66" stroke="#e8a93c" stroke-width="2"/>`));
nv.push('<path d="M818 0v66" stroke="#a3946a" stroke-width="4"/><path d="M671 0v66" stroke="#fff" stroke-width="2"/><path d="M13 0v66" stroke="#8d2020" stroke-width="2"/><path d="M5 8v52" stroke="#777" stroke-width="2"/>');
$('navigator').innerHTML = nv.join('');

/* ---------- ruler & markers ---------- */
const X = x => x - 898;
const marks = [[950, 2, 'Begin Transition to Past'], [1220, 3, 'Fully into the Past'], [1906, 4, 'Back to Present'], [2192, 5, 'Title']];
const markLine = ([x]) => `<i class="absolute inset-y-0 w-0.5 bg-[#e2a53f]" style="left:${X(x)}px"></i>`;
marks.forEach(([x, n, t]) => {
  $('markers').insertAdjacentHTML('beforeend', `<div class="absolute -top-0.5 flex items-start gap-1.5 text-[18px] leading-6 font-bold whitespace-nowrap text-[#111]" style="left:${X(x)}px"><span class="h-[26px] w-[26px] rounded-full border border-white bg-[#f1b440] text-center text-[18px] leading-6">${n}</span>${t}</div>`);
});
$('regions').innerHTML = marks.map(markLine).join('');
let tick = '';
for (let i = -14; i < 124; i++) {
  const x = 142 + i * 9.9, h = i % 20 === 0 ? 50 : i % 10 === 0 ? 16 : i % 5 === 0 ? 12 : 8;
  if (x > 0) tick += `<path d="M${Math.round(x)} ${50 - h}v${h}" stroke="#fff" stroke-width="1.500"/>`;
}
$('ruler').innerHTML = `<svg class="absolute inset-0 h-full w-[1376px]" viewBox="0 0 1376 50">${tick}</svg>` + ['00:01:40:00', '00:01:50:00', '00:02:00:00', '00:02:10:00', '00:02:20:00', '00:02:30:00', '00:02:40:00', '00:02:50:00'].map((t, i) => `<span class="absolute top-0 text-[21px] leading-5 font-bold text-white" style="left:${151 + (i - 1) * 198}px">${t}</span>`).join('') + marks.map(markLine).join('');

/* ---------- lanes ---------- */
const blob = (x, w, cy, h, c, st) => {
  let top = [], bot = [];
  const n = Math.max(5, Math.round(w / 3));
  for (let i = 0; i <= n; i++) {
    const f = i / n, env = i === 0 || i === n ? .05 : (f < .35 ? .35 + f * 1.9 : 1.02 - (f - .35) * 1.15);
    const a = env * h * (.7 + rnd() * .45), px = x + w * f;
    top.push(`${px.toFixed(1)},${(cy - a).toFixed(1)}`); bot.unshift(`${px.toFixed(1)},${(cy + a * .9).toFixed(1)}`);
  }
  return `<polygon points="${top.concat(bot).join(' ')}" fill="${c}" ${st ? `stroke="${st}"` : ''}/>`;
};
const noise = (x0, x1, cy, h, c) => {
  let t = [], b = [];
  for (let x = x0; x <= x1; x += 5) { const a = h * (.3 + rnd() * .5 + .5 * Math.exp(-(((x - 140) / 60) ** 2))); t.push(`${x},${(cy - a).toFixed(1)}`); b.unshift(`${x},${(cy + a).toFixed(1)}`); }
  return `<polygon points="${t.concat(b).join(' ')}" fill="${c}"/>`;
};
let s = '';
for (let i = 0; i < 8; i++) s += `<rect x="${142 + (i - 1) * 198}" y="0" width="198" height="1410" fill="${i % 2 ? '#acacac' : '#b8b8b8'}"/>`;
for (let y = 75; y < 1410; y += 114) s += `<rect x="0" y="${y}" width="1376" height="2" fill="#4b4b4b"/><rect x="0" y="${y + 2}" width="1376" height="6" fill="#fff" fill-opacity=".18"/>`;
s += '<path d="M0 130h320" stroke="#999"/>';
[[52, 20], [77, 18], [98, 22], [114, 45], [146, 37], [192, 24], [222, 14], [236, 22], [276, 34]].forEach(([x, w]) => s += blob(x, w, 130, 34, '#979797'));
/* Rachel */
s += '<rect x="0" y="198" width="330" height="104" fill="#1c17cf"/>';
[[0, 50], [96, 3], [214, 8], [260, 16], [316, 6]].forEach(([x, w]) => s += `<rect x="${x}" y="198" width="${w}" height="102" fill="#d3fc7c"/>`);
s += '<rect x="143" y="198" width="46" height="104" fill="#6664de" stroke="#fff" stroke-opacity=".6" stroke-width="2"/>';
s += '<path d="M0 248h330" stroke="#111" stroke-width="3"/><path d="M0 248h330" stroke="#ddd"/>';
[[54, 19], [79, 17], [100, 43], [196, 22], [226, 12], [238, 22], [278, 34]].forEach(([x, w]) => s += blob(x, w, 248, 26, '#1b1a48', '#05052a'));
s += blob(149, 36, 248, 24, '#c5c1f2', '#222');
[2, 77, 188, 260].forEach(x => s += `<path d="M${x} 202v96" stroke="#7b1d3a" stroke-width="2"/>`);
[54, 82, 99, 144, 190, 214, 226, 276, 316].forEach(x => s += `<path d="M${x} 198v104" stroke="#0d0a70" stroke-width="2"/>`);
[52, 99, 142, 226, 274].forEach(x => s += `<path d="M${x} 286l10 14h-10z" fill="#8c8aef"/>`);
s += '<circle cx="40" cy="213" r="10" fill="#8f8f8f"/><path d="M40 203v10" stroke="#444"/><ellipse cx="155" cy="195" rx="6" ry="6" fill="#fff" stroke="#333" stroke-width="2"/>';
s += '<path d="M0 301h330" stroke="#f2f2f2" stroke-width="2"/>';
/* Nate */
s += '<rect x="53" y="311" width="28" height="104" fill="#2c2b3f"/><rect x="81" y="311" width="184" height="104" fill="#1c17cf"/><rect x="276" y="311" width="37" height="104" fill="#1c17cf"/>';
s += '<path d="M53 362h212M276 362h37" stroke="#ddd"/>';
[[82, 14], [98, 42], [147, 38], [194, 22], [222, 12], [237, 20], [278, 30]].forEach(([x, w]) => s += blob(x, w, 362, 26, '#1b1a48', '#05052a'));
[97, 236, 256].forEach(x => s += `<path d="M${x} 312v102" stroke="#7b1d3a" stroke-width="2"/>`);
[81, 142, 194, 221, 265].forEach(x => s += `<path d="M${x} 311v104" stroke="${x === 142 ? '#ccc' : '#0d0a70'}" stroke-width="2"/>`);
[55, 97, 144, 192, 236, 276].forEach(x => s += `<path d="M${x} 400l10 14h-10z" fill="#8c8aef"/>`);
/* bus waveforms */
s += noise(2, 330, 446, 6, '#989898') + noise(2, 330, 500, 4, '#989898') + noise(2, 330, 1014, 1.500, '#989898');
/* orange items */
[539, 653].forEach((y, k) => {
  s += `<rect x="0" y="${y}" width="600" height="106" fill="#ee8833"/><rect x="0" y="${y}" width="600" height="24" fill="#dd7426"/>`;
  s += k ? `<path d="M0 ${y + 54}L120 ${y + 26}H330V${y + 48}H0z" fill="#d36c20" fill-opacity=".6"/><path d="M0 ${y + 54}Q80 ${y + 30} 200 ${y + 4}" fill="none" stroke="#a04516" stroke-width="2"/>` : `<path d="M80 ${y + 6}H330V${y + 78}Q240 ${y + 30} 80 ${y + 6}z" fill="#c5621c" fill-opacity=".8"/><path d="M8 ${y + 6}Q140 ${y + 10} 330 ${y + 80}" fill="none" stroke="#7b2c12" stroke-width="2"/>`;
  s += noise(2, 320, y + 32, 3, '#4b3316') + `<path d="M0 ${y + 50}h330" stroke="#1a1a1a" stroke-width="2"/>`;
  s += noise(2, 320, y + 70, 2, '#4b3316') + `<path d="M0 ${y + 88}h330" stroke="#1a1a1a" stroke-width="2"/>`;
});
/* pink items */
[[1110, 600], [1224, 939], [1338, 905]].forEach(([y, w], k) => {
  s += `<rect x="0" y="${y}" width="${w}" height="${k === 1 ? 102 : 106}" fill="#d772a5" stroke="#5b5b5b" stroke-width="2"/><rect x="0" y="${y}" width="${w}" height="26" fill="#c0638f"/><path d="M0 ${y + 28}h${w}" stroke="#222" stroke-width="2"/>`;
  if (k < 2) s += `<path d="M0 ${y + 47}h330M0 ${y + 66}h330M90 ${y + 86}h240" stroke="#222" stroke-width="2"/>`;
});
s += '<path d="M374 1340v80" stroke="#999"/><path d="M374 1377l11 11-11 11-11-11z" fill="#92708a" stroke="#555"/>';
s += '<path d="M52 0v1410M322 0v1410M1008 0v1410M1294 0v1410" stroke="#e2a53f" stroke-width="1.500"/><path d="M233 0v1410" stroke="#8d7a3d" stroke-opacity=".6" stroke-width="4"/>';
const itemHead = (y, t, b) => `<div class="absolute left-[20px] flex items-center gap-1 overflow-hidden text-[22px] leading-6 font-bold whitespace-nowrap text-[#474747]" style="top:${y}px;width:884px"><svg class="h-[22px] w-[22px] flex-none" viewBox="0 0 22 22"><circle cx="11" cy="11" r="10" fill="#d8d8d8" stroke="#555"/><path d="M11 1v10" stroke="#7b1d1d" stroke-width="2"/></svg><span class="bg-[#8a8a8a]/70 px-0.5 text-[17px] font-normal">FX</span><svg class="h-6 w-6 flex-none bg-[#8a8a8a]/70" viewBox="0 0 36 36">${node3('#333')}</svg><span class="pl-1">${t}</span></div>` + (b ? `<span class="absolute left-0.5 text-[21px] leading-6 font-bold text-[#555]" style="top:${y + 69}px">${b}</span>` : '');
$('lanes').innerHTML = `<svg class="absolute top-0 left-0 h-[1410px] w-[1376px]" viewBox="0 0 1376 1410">${s}</svg>`
  + itemHead(541, '&lt;&lt; Space Love render', '-0.05dB') + itemHead(655, '&lt;&lt; Unnatural Habitat', '-2.13dB')
  + itemHead(1111, '&lt;&lt; Amusement park', '-15.0dB') + itemHead(1225, '&lt;&lt; Beach Beach Am', '-20.4dB')
  + itemHead(1339, '&lt;&lt; 32-94 Roller Coaster Roller Coaster_ Pass By, Amusement Park _ Roller C')
  + `<span class="absolute top-[1372px] left-[386px] text-[20px] font-bold text-[#8a7a85]">1.00x</span>`;

/* ---------- track control panel ---------- */
const tracks = [
  { n: 3, name: 'Studio_2', c: '#851b9c', bg: '#83668e', tc: '#e879f0', w: '#fff', fx: [['ReaFir', 1], ['General Dynam', 1], ['ReaEQ', 3]], k: 'kLilac', fxOn: 1, last: 1, db: '' , m: []},
  { n: 4, name: 'ACTUALITY BUS', bus: 1, c: '#1c17cf', bg: '#63669c', tc: '#9693f5', w: '#fff', r: 'y', fx: [['ReaFir', 1, 1], ['General Dynam', 1, 1], ['ReaEQ', 3]], k: 'kLilac', fxOn: 1, m: [] },
  { n: 5, name: 'Rachel', sel: 1, c: '#1c17cf', bg: '#8889b6', tc: '#333', w: '#fff', g: 1, fx: [['ReaFir'], ['ReaEQ']], k: 'kTeal', a: -110, fxOn: 1, m: [0, 38] },
  { n: 6, name: 'Nate', c: '#1c17cf', bg: '#63669c', tc: '#9693f5', w: '#fff', g: 1, last: 1, fx: [['ReaFir'], ['ReaEQ']], k: 'kTeal', a: 50, fxOn: 1, m: [60, 64] },
  { n: 7, name: 'MUSIC BUS', bus: 1, c: '#d3853d', bg: '#9a866d', tc: '#d3853d', w: '#5c4020', r: 'b', fx: [['ReaEQ'], ['ReaEQ']], fx2: 'masterL', k: 'kLight', fxOn: 1, m: [36, 52] },
  { n: 8, name: 'Music1', wide: 1, c: '#ee8833', bg: '#a08562', tc: '#ee8833', w: '#63421f', g: 1, k: 'kLight', db: '-9.9', m: [64, 64] },
  { n: 9, name: 'Music2', c: '#ee8833', bg: '#a08562', tc: '#ee8833', w: '#63421f', r: 'y', g: 1, send: 1, k: 'kLight', m: [44, 46] },
  { n: 10, name: 'Music3', c: '#ee8833', bg: '#a08562', tc: '#ee8833', w: '#63421f', r: 'y', g: 1, send: 1, k: 'kLight', m: [] },
  { n: 11, name: 'Reverb', c: '#ccac3e', bg: '#99946b', tc: '#ccac3e', w: '#5c4f20', r: 'b', last: 1, fx: [['ReaVerb', 2]], k: 'kLight', fxOn: 1, m: [] },
  { n: 12, name: 'SFX BUS', bus: 1, c: '#d23b82', bg: '#996d86', tc: '#d23b82', w: '#fff', g: 1, fx: [['ReaEQ'], ['masterL']], k: 'kLight', fxOn: 1, m: [38, 34] },
  { n: 13, name: 'Sfx_1', wide: 1, c: '#d673a4', bg: '#9c8090', tc: '#d673a4', w: '#5c3148', k: 'kLight', db: '-35.', m: [26, 16] },
  { n: 14, name: 'Sfx_2', wide: 1, c: '#d673a4', bg: '#9c8090', tc: '#d673a4', w: '#5c3148', k: 'kLight', db: '-50.', m: [1, 2] },
  { n: 15, name: 'Sfx_3', wide: 1, c: '#d673a4', bg: '#9c8090', tc: '#d673a4', w: '#5c3148', k: 'kLight', db: '-44.', m: [] },
];
const pill = ([t, w, off]) => `<button class="flex-none overflow-hidden rounded-md px-1.5 text-left text-[16px] whitespace-nowrap ${w === 3 ? 'h-3.5 w-[118px] leading-[15px]' : w === 2 ? 'h-8 w-[126px]' : w ? 'h-8 w-[118px]' : 'h-8 w-[60px]'} ${off ? 'bg-[#716833] text-[#f0cf68]' : 'bg-[#929292] text-[#303030]'}">${t}</button>`;
$('tcp').innerHTML = tracks.map(t => {
  const folder = `<svg class="h-3.5 w-4" viewBox="0 0 16 14"><path d="M0 2h9l2 4h5v8H0z" fill="#000" fill-opacity=".3"/></svg>`;
  const nub = `<i class="absolute top-[49px] -right-2 z-10 h-3.5 w-3.5 rounded-full ${t.sel ? 'border-2 border-[#262626] bg-white' : 'bg-[#262626]'}"></i>`;
  const num = `<div class="flex w-[39px] flex-none flex-col items-center justify-between pb-1.5 ${t.bus ? 'mt-7 h-[84px] rounded-t-[20px] pt-[30px]' : t.last ? 'mb-1 rounded-b-[20px] pt-8' : 'pt-[42px]'}" style="background:${t.c}"><span class="text-[21px] leading-6" style="color:${t.w}">${t.n}</span>${folder}</div>`;
  const left = t.bus
    ? `<div class="relative w-[41px] flex-none border-r-2 border-[#262626] bg-[#262626]"><svg class="absolute top-0.5 left-2 h-6 w-6" viewBox="0 0 24 24"><circle cx="12" cy="12" r="12" fill="#808886"/><path d="M5 7h14l-7 11z" fill="#262626"/></svg>${num}${nub}</div>`
    : `<div class="relative flex w-[61px] flex-none border-r-2 border-[#262626] pl-5">${num}${nub}</div>`;
  const nameBox = `<div class="mt-2 flex h-12 flex-none items-center rounded-full bg-[#262626] ${t.bus ? 'w-[340px]' : 'w-80'}" ${t.sel ? 'style="background:#dcdce8"' : ''}>${rec('h-11 w-11 flex-none rounded-full bg-[#262626]')}<span class="mb-1 flex-1 pl-4 text-[23px] leading-8" style="color:${t.tc}">${t.name}</span>${vol(t.g, t.sel ? -20 : 0)}</div>`;
  const rowB = t.wide
    ? `<div class="mt-2 flex items-center gap-3">${routeBtn()}${fxBtn(0)}${knob(t.k)}<button class="flex h-10 w-20 flex-none items-center justify-center rounded border-2 border-black/50 border-b-black bg-linear-to-b from-black/60 to-black/75 text-[16px] text-[#c9c9c9]"><svg class="h-6 w-6" viewBox="0 0 36 36">${node3('#6ff5cf')}</svg>READ</button>${phase('h-8 w-8')}</div>`
    : `<div class="mt-2 flex items-center gap-3">${ms}${routeBtn(t.r)}${fxBtn(t.fxOn)}${knob(t.k, t.a)}</div>`;
  const body = `<div class="flex-none overflow-hidden ${t.bus ? 'w-[363px]' : t.wide ? 'w-[477px]' : 'w-[343px]'}" style="background:${t.bg}"><div class="flex gap-3 pl-[11px]">${nameBox}${t.wide ? `<div class="pt-3">${ms}</div>` : ''}</div><div class="${t.bus ? 'pl-8' : 'pl-3'}">${rowB}</div></div>`;
  const side = t.wide ? '' : `<div class="flex w-[154px] flex-none gap-1 overflow-hidden pt-3.5 pl-3 ${t.fx2 ? 'flex-wrap content-start' : 'flex-col'}">${t.send ? `<div class="flex h-9 w-full items-center gap-3.5 text-[16px] text-[#b5b5b5]">11:Reverb<svg class="h-9 w-9" viewBox="0 0 36 36"><circle cx="18" cy="18" r="17" fill="#929292" stroke="#3c6b5c"/><circle cx="18" cy="18" r="8" fill="#262626"/><circle cx="15" cy="31" r="2.500" fill="#000"/></svg></div>` : t.fx2 ? pill(t.fx[0]) + pill([t.fx2]) + pill(t.fx[1]) : t.fx.map(pill).join('')}</div>`;
  const lab = (v, top) => `<span class="absolute left-0 text-[18px] leading-5 font-bold text-[#4d4d4d]" style="top:${top}px">${v}</span>`;
  const meter = `<div class="relative flex flex-1 items-end gap-0.5 overflow-hidden pb-0.5 ${t.wide ? 'ml-1' : ''}">${(t.m || []).map(h => `<i class="flex-1 bg-[#77fb9f]" style="height:${h}px"></i>`).join('')}${lab(t.db || (t.bus ? '' : '-6'), 4)}${lab('-24-', 42)}${lab('-42-', 70)}${lab('-60-', 96)}</div>`;
  return `<div class="flex h-[114px] border-b-2 border-[#1c1c1c]">${left}${body}<div class="flex flex-1 bg-[#262626]">${side}${meter}</div></div>`;
}).join('');

/* ---------- mixer strips ---------- */
const eq = (kind) => {
  const base = `<rect width="170" height="86" fill="#000"/><path d="M0 21h170M0 43h170M0 64h170" stroke="#444" stroke-width="1"/>`;
  if (kind === 2) return `<svg class="h-[86px] w-full" viewBox="0 0 164 86" preserveAspectRatio="none">${base}<path d="M0 43v43h12q4-26 10-34 14-8 100-9h42v43-43z" fill="#2d6568"/><path d="M12 86q6-30 14-36 20 2 34-6l80-2q10-2 14 44V86z" fill="#000"/><path d="M154 43h10v43h-10z" fill="#2d6568"/><path d="M12 86q6-32 14-36 20 2 34-6l80-2q12-2 14 44" fill="none" stroke="#5fd8dc" stroke-width="2"/><path d="M0 86l30-24 8-2 6-4 6-6 4 4 6-8 6 6 8-4 8 2 6-6 6 6 8-2 6 6 4-2 8 8 4-4 6 10 8 2" fill="none" stroke="#d8cc3c" stroke-width="1.500"/><circle cx="78" cy="43" r="9" fill="none" stroke="#666"/><circle cx="96" cy="43" r="9" fill="none" stroke="#666"/><circle cx="22" cy="40" r="9" fill="#fff"/><circle cx="22" cy="64" r="9" fill="#ea4033"/><circle cx="42" cy="54" r="9" fill="#fff"/><circle cx="150" cy="64" r="9" fill="#ffff4a"/></svg>`;
  if (kind === 3) return `<svg class="h-[90px] w-full" viewBox="0 0 170 90" preserveAspectRatio="none"><rect width="170" height="90" fill="#000"/><path d="M0 22h170M0 67h170" stroke="#555"/><path d="M0 45H170v20q-2-18-8-18-28 0-50 18-18 8-38 2Q40 45 14 46 2 46 0 64z" fill="#2d6568"/><path d="M0 66q2-18 14-19 26-2 60 18 20 8 38 2 22-18 50-20 8 0 8 20" fill="none" stroke="#5fd8dc" stroke-width="2"/><path d="M8 70l14-6 12-1 4-22 8-4 8 3 4-3 8 8 3-8 3 16 4-12 3 16 5-14 3 18 4-12 3 16 4-10 4 18 4-8 4 16 5 4 2 10 5-6 4 8 6-6 5 8 8-2 6 4 3 12" fill="none" stroke="#d8cc3c" stroke-width="1.500"/><circle cx="0" cy="67" r="9" fill="#ea4033"/><circle cx="92" cy="68" r="9" fill="#fff"/><circle cx="170" cy="67" r="9" fill="#ffff4a"/><circle cx="50" cy="45" r="9" fill="none" stroke="#555"/></svg>`;
  return `<svg class="h-[86px] w-full" viewBox="0 0 170 86" preserveAspectRatio="none">${base}<path d="M0 43h26q-12 6-18 43H0z" fill="#2d6568"/><path d="M8 86q6-42 22-43l60-1 80-2" fill="none" stroke="#5fd8dc" stroke-width="2"/><circle cx="81" cy="43" r="9" fill="none" stroke="#666"/><circle cx="99" cy="43" r="9" fill="none" stroke="#666"/><circle cx="24" cy="40" r="9" fill="#fff"/><circle cx="45" cy="43" r="9" fill="#fff"/><circle cx="18" cy="64" r="9" fill="#ea4033"/><circle cx="131" cy="40" r="9" fill="#fff"/><circle cx="156" cy="64" r="9" fill="none" stroke="#d8cc3c" stroke-width="1.500"/></svg>`;
};
const P = (t, off) => `<button class="h-8 flex-none overflow-hidden rounded-md text-[19px] whitespace-nowrap ${off ? 'bg-[#716833] text-[#f0cf68]' : 'bg-[#929292] text-[#303030]'}">${t}</button>`;
const box = (t, g) => `<div class="flex-none overflow-hidden rounded-md bg-[#929292] px-1 pb-0.5 text-center text-[19px] leading-[34px] text-[#303030]">${t}<div class="overflow-hidden">${g}</div></div>`;
const comp = bars => `<svg class="h-40 w-full" viewBox="0 0 164 160" preserveAspectRatio="none"><rect width="164" height="160" fill="#212121"/><path d="M0 26h164M0 53h164M0 80h164M0 106h164M0 133h164" stroke="#4c4c4c"/><path d="M0 49h164" stroke="#e33b2c" stroke-width="1.500"/><path d="M65 49v-6l8 3v3z" fill="#c08a2b"/><circle cx="82" cy="49" r="10" fill="#b92a1c"/>${bars ? '<path d="M92 63h8v97h-8z" fill="#37801f"/><path d="M109 93h8v67h-8z" fill="#70fb4c"/>' : ''}</svg>`;
const par = (t, v, a, r) => `<div class="flex h-11 flex-none overflow-hidden rounded-r-md"><svg class="h-11 w-11 flex-none bg-[#929292]" viewBox="0 0 44 44"><path d="M32 22h12v22H32z" fill="#539684"/><circle cx="20" cy="22" r="24" fill="#262626"/><path d="${a}" fill="none" stroke="#bbb" stroke-width="4"/><circle cx="22" cy="22" r="8" fill="#539684"/><circle cx="${r[0]}" cy="${r[1]}" r="4" fill="#fff"/></svg><div class="flex-1 overflow-hidden text-[19px] leading-[22px] whitespace-nowrap text-[#2c2c2c]"><p class="bg-[#929292] pl-1">${t}</p><p class="bg-[#539684] pl-1">${v}</p></div></div>`;
const vbtn = 'h-10 w-10 flex-none rounded-sm border-2 border-black bg-linear-to-b from-[#4a4d4c] to-[#202222] text-[22px] leading-9';
const routeSq = k => `<svg class="h-10 w-10 flex-none rounded border-2 border-black bg-[#262626]" viewBox="2 2 36 36"><path d="M9 2h9L8 38H-1z" fill="#55b89a"/><path d="M21 2h9L20 38h-9z" fill="${rc(k)[0]}"/><path d="M34 2h9L33 38h-9z" fill="${rc(k)[1]}"/></svg>`;
const fxV = on => on
  ? `<button class="flex h-[72px] w-10 flex-none flex-col overflow-hidden rounded border-2 border-[#23523f] bg-[#3f775f] text-[20px] text-[#6fe0b4]"><span class="h-[38px] w-full leading-[38px]">FX</span><span class="flex h-[30px] w-full items-center justify-center bg-[#69bd99]">${power('#23523f')}</span></button>`
  : `<button class="flex h-[72px] w-10 flex-none flex-col overflow-hidden rounded border-2 border-black bg-linear-to-b from-[#3a3c3c] to-[#2c2e2e] text-[20px] text-[#e4e4e4]"><span class="h-[38px] w-full leading-[38px]">FX</span><span class="flex h-[30px] w-full items-center justify-center bg-linear-to-b from-[#878a8a] to-[#5b5e5e]">${power('#2c2c2c')}</span></button>`;
const envBtn = grey => `<button class="h-10 w-10 flex-none rounded border-2 border-black p-px ${grey ? 'bg-linear-to-b from-[#8d9090] to-[#55595a]' : 'bg-[#262626]'}"><svg class="h-[34px] w-[34px]" viewBox="-4 -3 44 44">${node3(grey ? '#333' : '#6ff5cf')}</svg></button>`;
const cap = top => `<svg class="pointer-events-none absolute left-1/2 h-[88px] w-[42px] -translate-x-1/2" style="top:${top}px" viewBox="0 0 42 88"><path d="M1 12 14 1h14l13 11v62L28 86H14L1 74z" fill="#000"/><path d="M3 13 14 3h14l11 10v4H3z" fill="url(#capA)"/><rect x="3" y="16" width="36" height="26" fill="url(#capB)"/><rect x="3" y="46" width="36" height="26" fill="url(#capC)"/><path d="M3 72h36v2L28 84H14L3 74z" fill="url(#capD)"/></svg>`;
const speaker = f => `<svg class="h-8 w-5" viewBox="0 0 20 32"><path d="M2 10h5l10-8v28l-10-8H2z" fill="${f ? '#777' : 'none'}" stroke="#777" stroke-width="2"/></svg>`;
const strips = [
  { name: 'Studio_1', n: 2, c: '#851b9c', bg: '#83668e', tc: '#e879f0', w: '#851b9c', fx: P('ReaFir', 1) + P('General Dynamics') + box('ReaEQ', eq(1)) + box('ReaComp', comp()), cap: 85, db: '-inf' },
  { name: 'Studio_2', n: 3, c: '#851b9c', bg: '#83668e', tc: '#e879f0', w: '#f0f0f0', fx: P('ReaFir') + P('General Dynamics') + box('ReaEQ', eq(1)) + box('ReaComp', comp()), cap: 85, db: '-inf', end: 1 },
  { name: 'ACTUALITY BU', n: 4, bus: 1, c: '#1c17cf', bg: '#63669c', tc: '#9693f5', w: '#f0f0f0', r: 'y', fx: P('ReaFir', 1) + P('General Dynamics', 1) + box('ReaEQ', eq(2)) + box('ReaComp', comp(1)) + box('ReaComp', `<svg class="h-2 w-full" viewBox="0 0 164 8"><rect width="164" height="8" fill="#212121"/><path d="M0 4h164" stroke="#e33b2c"/><path d="M64 0h8v4h-8z" fill="#c08a2b"/><path d="M72 0h20v8H72z" fill="#b92a1c"/><path d="M92 4h8v4h-8z" fill="#37801f"/><path d="M109 4h8v4h-8z" fill="#70fb4c"/></svg>`), m: [229, 256], pk: [251, 278], cap: 92, db: '-7.0', sc: 1 },
  { name: 'Rachel', n: 5, sel: 1, c: '#1c17cf', bg: '#8889b6', tc: '#333', w: '#f0f0f0', k: 'kTeal', a: -110, fx: P('ReaFir') + P('ReaEQ'), m: [128, 75], pk: [142, 89], cap: 115, db: '-7.2', g: 1, empty: 1 },
  { name: 'Nate', n: 6, up: 1, c: '#1c17cf', bg: '#63669c', tc: '#9693f5', w: '#f0f0f0', k: 'kTeal', a: 50, fx: P('ReaFir') + P('ReaEQ'), m: [218, 245], pk: [239, 266], cap: 87, db: '-9.0', g: 1, end: 1, spk: 1, empty: 1 },
  { name: 'MUSIC BUS', n: 7, bus: 1, wide: 1, c: '#d3853d', bg: '#9a866d', tc: '#d3853d', w: '#4a3318', r: 'b', k: 'kLight', env: 1, m: [184, 175], pk: [201, 207], cap: 92, db: '-16.0',
    fx: P('ReaEQ') + par('Freq-Low Pass', '7939.3 Hz', 'M14 37A17 17 0 1 1 37 27', [37, 27]) + par('Gain-Band 7', '-0.9 dB', 'M14 37A17 17 0 0 1 18 6', [18, 6]) + box('ReaEQ', eq(3)) + par('Freq-High Pass', '20.0 Hz', '', [18, 37]) + par('Freq-Low Pass', '24000.0 Hz', 'M14 37A17 17 0 1 1 26 37', [26, 37]) + P('masterLimiter') },
  { name: 'Music1', n: 8, c: '#ee8833', bg: '#a08562', tc: '#ee8833', w: '#63421f', k: 'kLight', fx: '', fxOff: 1, m: [210, 185], pk: [219, 211], cap: 89, db: '-9.9', g: 1, empty: 2 },
  { name: '', n: '', c: '#ee8833', bg: '#a08562', tc: '#ee8833', w: '#63421f', k: 'kLight', fx: '<p class="pt-[232px] pl-1 text-[19px] text-[#b5b5b5]">11:Reverb</p>', m: [151, 162], pk: [174, 180], cap: 89, db: '-26.' },
];
$('strips').innerHTML = strips.map(t => {
  const dd = `<svg class="pointer-events-none absolute h-8 w-8" viewBox="0 0 32 32"><circle cx="16" cy="16" r="16" fill="${t.bg}"/><path d="M8 11h16l-8 12z" fill="#e4dde8"/></svg>`;
  return `<section class="flex flex-none flex-col border-l-2 border-[#151515] ${t.wide ? 'w-[184px]' : 'w-[176px]'}">
  <div class="flex flex-none flex-col gap-1 overflow-hidden bg-[#262626] pt-0.5 ${t.sc ? 'border-r-[7px] border-[#3f3f3f] pr-0.5' : 'pr-0.5'} ${t.up ? 'h-[440px]' : 'h-[448px]'}">${t.fx}${t.empty ? `<i class="mx-6 h-px flex-none bg-[#404040] ${t.empty === 2 ? 'mt-[218px]' : 'mt-[146px]'}"></i>` : ''}</div>
  <div class="h-40 flex-none pt-3 pr-3 pl-2.5" style="background:${t.bg}">
    <div class="relative flex items-center justify-end"><select aria-label="Input" class="h-10 w-full appearance-none rounded-l-lg rounded-r-[20px] bg-black/27 pl-2 text-[15px] text-[#ececec]"><option>Input 1</option></select><span class="absolute right-9 h-8">${dd}</span></div>
    <div class="mt-2 flex justify-between"><div class="relative flex items-center"><select aria-label="Input mode" class="h-10 w-20 appearance-none rounded-l-lg rounded-r-[20px] bg-black/27 pl-3 text-[20px] text-[#d8d8d8]"><option>in</option></select><span class="absolute right-9 h-8">${dd}</span></div><div class="h-10 w-10 bg-black/25 p-[5px]"><button class="flex h-[30px] w-[30px] flex-col items-center justify-center rounded border-2 border-black/40 bg-white/40 text-[13px] leading-[13px] font-bold text-[#444]"><span>IN</span><span>FX</span></button></div></div>
    <div class="mt-2 flex justify-center">${knob(t.k || 'kLilac', t.a)}</div>
  </div>
  <div class="flex flex-none bg-[#262626] pr-3 pl-1.5 ${t.bus ? 'h-[376px]' : t.up ? 'h-[364px]' : 'h-[356px]'}">
    <div class="relative flex flex-none items-end gap-0.5 ${t.wide ? 'w-14' : 'w-12'}"><span class="absolute top-[18px] left-2 text-[19px] leading-5 font-bold text-[#666]">${t.db}</span>${(t.m || []).map((h, i) => `<i class="relative flex-1 bg-[#77fb9f]" style="height:${h}px"><i class="absolute inset-x-0 h-0.5 bg-[#77fb9f]" style="bottom:${t.pk[i]}px"></i></i>`).join('')}</div>
    <div class="relative mt-3 ml-1 flex w-[50px] flex-none justify-center ${t.g ? 'bg-[#234237]' : ''}"><i class="mt-[18px] mb-[18px] w-1.5 ${t.g ? 'bg-[#15302a]' : 'bg-black'}"></i>${cap(t.cap - 13)}<input type="range" aria-label="Volume ${t.name}" class="absolute inset-0 h-full w-full opacity-0 [writing-mode:vertical-lr]"></div>
    <div class="ml-auto flex flex-col pt-3"><button class="${vbtn} text-[#c2685e]">M</button><button class="${vbtn} text-[#c6b86a]">S</button><div class="mt-3">${routeSq(t.r)}</div><div class="mt-4">${fxV(!t.fxOff)}</div><div class="mt-3">${envBtn(t.env)}</div><div class="mt-3 flex justify-center">${phase('h-[30px] w-[30px]')}</div></div>
  </div>
  <div class="flex h-14 flex-none items-center bg-[#262626] pl-4"><span class="w-5">${speaker(t.spk)}</span><span class="${t.wide ? 'ml-9' : 'ml-[26px]'}">${rec('h-10 w-10')}</span></div>
  <div class="h-[52px] flex-none overflow-hidden px-1.5 text-center text-[23px] leading-[50px] whitespace-nowrap" style="color:${t.tc};background:${t.sel ? '#b4b4d2' : '#262626'}">${t.name}</div>
  <div class="relative flex h-10 flex-none items-center bg-[#333333]">${t.bus ? `<svg class="h-[26px] w-[26px] flex-none" viewBox="0 0 26 26"><circle cx="13" cy="13" r="12" fill="#808886"/><path d="M8 6v14l11-7z" fill="#262626"/></svg>` : ''}<div class="relative flex h-10 flex-1 justify-center text-[21px] leading-9 ${t.bus ? 'rounded-l-xl' : ''} ${t.end ? 'mr-1 rounded-r-xl' : ''}" style="background:${t.c};color:${t.w}">${t.n}<i class="absolute -top-2 h-3.5 w-3.5 rounded-full ${t.sel ? 'border-2 border-[#222] bg-white' : 'bg-[#262626]'}"></i></div></div>
  </section>`;
}).join('');

/* ---------- master ---------- */
const scale = [0, 6, 12, 18, 24, 30, 36, 42, 48, 54].map((v, i) => `<span class="absolute left-[34px] w-[72px] text-center text-[19px] leading-5 font-bold ${i > 1 ? 'text-[#3f9a5f]' : 'text-[#666]'}" style="top:${77 + i * 46}px">-${v}-</span>`).join('');
const redBtn = 'h-10 w-10 flex-none rounded-sm border-2 border-[#250606] bg-linear-to-b from-[#4f3033] to-[#241013] text-[22px] leading-9';
$('master').innerHTML = `
<div class="h-[444px] flex-none px-0.5 pt-0 pr-3">
  <div class="h-[203px] overflow-hidden rounded-md bg-[#929292] px-1 text-[19px] leading-9 whitespace-nowrap text-[#222]"><p class="-ml-0.5">Spectrograph Spectrogram Meter</p><canvas id="spectro" width="242" height="162" class="block h-[162px] w-full"></canvas></div>
  <div class="mt-1 h-[232px] overflow-hidden rounded-md bg-[#929292] px-1 text-[18px] leading-8 whitespace-nowrap text-[#222]"><p class="-ml-0.5">Loudness Meter Peak/RMS/LUFS</p>
    <svg class="block h-[196px] w-full bg-black" viewBox="0 0 242 196" font-family="Liberation Sans" font-size="19"><g stroke="#8a8a8a"><path d="M14 34h172M14 60h172M14 86h172M14 112h172"/></g><path d="M14 134h176" stroke="#fff" stroke-width="2"/><path d="M12 84l14-14 20 0 8 14-8 12H22z" fill="#2c6a86"/><path d="M134 84l14-14 16 0 6 14-6 12h-16z" fill="#14303c"/><path d="M24 86h24v48H24zM144 86h24v48h-24z" fill="#ffff3c"/><path d="M72 90h24v44H72z" fill="#57b9f5"/><path d="M24 79h24M144 79h24" stroke="#ffff3c" stroke-width="4"/><path d="M72 86h24" stroke="#57b9f5" stroke-width="3"/><path d="M110 84h12v12h-8" fill="none" stroke="#57b9f5" stroke-width="3"/><g fill="#fff"><text x="14" y="25">-18.2-22.3</text><text x="20" y="159">L-M</text><text x="72" y="159">L-SLRA</text><text x="144" y="159">L-I</text><text x="14" y="187">-22.3-25.24.7-24.0</text></g><g fill="#8e8e8e"><text x="200" y="42">+0</text><text x="194" y="70">-12</text><text x="194" y="94">-24</text><text x="194" y="126">-48</text></g></svg>
  </div>
</div>
<div class="flex min-h-0 flex-1 bg-[#73130f] pl-3">
  <div class="flex w-[188px] flex-none flex-col">
    <div class="flex h-[92px] flex-none flex-col items-center gap-2 pt-1.5 pr-3 text-[17px] leading-5 text-[#e4d5d5]">center${knob('kPink')}</div>
    <div class="relative flex-1 bg-[#262626]">
      <p class="pt-2 text-center text-[17px] leading-5 text-[#8c8c8c]">0.00dB</p>
      <p class="flex gap-8 pt-6 pl-[18px] text-[20px] leading-5 font-bold text-[#9a9a9a]"><span>-2.0</span><span>-2.0</span></p>
      <div class="absolute top-[100px] left-0 flex h-[460px] w-[140px] items-end gap-1">
        <i class="flex h-[341px] w-8 flex-col bg-[#53a578]"><i class="h-[52px] bg-[#e9354f]"></i></i>
        <i class="relative h-[389px] w-[34px] bg-[#77fb9f]"><i class="absolute inset-x-0 -top-8 h-0.5 bg-[#77fb9f]"></i></i>
        <i class="relative -ml-0.5 h-[427px] w-[34px] bg-[#77fb9f]"><i class="absolute inset-x-0 -top-8 h-0.5 bg-[#77fb9f]"></i></i>
        <i class="flex h-[341px] w-8 flex-col bg-[#53a578]"><i class="h-[52px] bg-[#e9354f]"></i></i>
      </div>
      ${scale}
      <div class="absolute top-[58px] right-0.5 flex h-[512px] w-11 justify-center"><i class="w-1 bg-black"></i>${cap(112)}<input type="range" aria-label="Master volume" class="absolute inset-0 h-full w-full opacity-0 [writing-mode:vertical-lr]"></div>
      <div class="absolute top-[560px] left-0 flex h-7 w-[140px] items-center justify-between bg-[#202020] pr-3 pl-5 text-[19px] font-bold text-[#53a578]"><span>L-S</span><span>-17.3</span></div>
      <p class="absolute inset-x-0 top-[592px] text-center text-[20px] leading-7 text-[#e0e0e0]">MASTER</p>
    </div>
  </div>
  <div class="flex flex-1 flex-col items-center pt-3 text-[16px] leading-5 text-[#c79a9a]">
    <button aria-label="Mono" class="h-10 w-10 rounded-sm border-2 border-[#3a0a0a] bg-linear-to-b from-[#b57e7e] to-[#7c4444]"><svg class="h-9 w-9" viewBox="0 0 36 36" fill="none" stroke="#5a3a3a" stroke-width="2"><circle cx="14" cy="18" r="9"/><circle cx="22" cy="18" r="9"/></svg></button>
    <span class="my-1.5">MONO</span>
    <button class="${redBtn} text-[#d0685e]">M</button><button class="${redBtn} text-[#c6b86a]">S</button>
    <span class="mt-3">${routeSq('y')}</span><span class="mt-1.5 mb-2.5 text-[15px]">ROUTE</span>
    ${fxV(1)}
    <button aria-label="Trim" class="mt-3 h-10 w-10 rounded-sm border-2 border-[#3a0a0a] bg-linear-to-b from-[#b57e7e] to-[#7c4444]"><svg class="h-9 w-9" viewBox="-5 -3 46 44">${node3('#5a2f2f')}</svg></button>
    <span class="my-2">TRIM</span>
    <button class="${redBtn} font-['Liberation_Serif',serif] font-bold text-[#cfc3c3]">i</button>
  </div>
</div>`;
const g = $('spectro').getContext('2d');
const band = Array.from({ length: 81 }, () => rnd() * .22);
let drip = 30, heat = .1;
for (let x = 0; x < 242; x += 2) {
  if (rnd() < .3) drip = 14 + rnd() * 26 + (rnd() < .25 ? 40 : 0);
  if (rnd() < .35) heat = rnd() * .3;
  for (let y = 0; y < 162; y += 2) {
    const v = y < drip ? .2 + rnd() * .28 : .42 + y / 162 * .5 + heat + band[y / 2] + rnd() * .3 - .16;
    g.fillStyle = v < .4 ? '#5cc234' : v < .55 ? '#b0c93a' : v < .78 ? '#e6b23c' : v < .96 ? '#ee8a30' : v < 1.24 ? '#ea4a2a' : '#e5305f';
    g.fillRect(x, y, 3, 2);
  }
}
</script>
</body>
</html>
